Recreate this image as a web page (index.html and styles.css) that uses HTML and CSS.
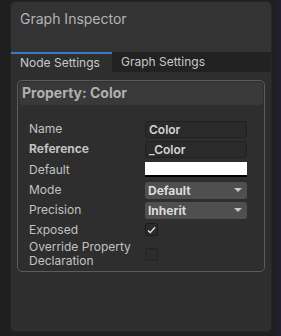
FILE: index.html
```html
<!DOCTYPE html>
<html lang="en">
<head>
<meta charset="UTF-8">
<meta name="viewport" content="width=device-width, initial-scale=1.0">
<title>Graph Inspector</title>
<link rel="stylesheet" href="styles.css">
</head>
<body>

<div class="page">
  <div class="inspector">
    <div class="title">Graph Inspector</div>

    <div class="tabs">
      <div class="tab active">Node Settings</div>
      <div class="tab">Graph Settings</div>
    </div>

    <div class="content">
      <div class="property">
        <div class="property-header">Property: Color</div>

        <div class="rows">
          <div class="row">
            <span class="label">Name</span>
            <span class="text-field">Color</span>
          </div>
          <div class="row">
            <span class="label bold">Reference</span>
            <span class="text-field">_Color</span>
          </div>
          <div class="row">
            <span class="label">Default</span>
            <span class="color-field"></span>
          </div>
          <div class="row">
            <span class="label">Mode</span>
            <span class="dropdown">Default<span class="arrow"></span></span>
          </div>
          <div class="row">
            <span class="label">Precision</span>
            <span class="dropdown">Inherit<span class="arrow"></span></span>
          </div>
          <div class="row short">
            <span class="label">Exposed</span>
            <span class="checkbox">
              <svg width="9" height="8" viewBox="0 0 9 8"><polyline points="1,4.5 3.3,6.6 8,1.2" fill="none" stroke="#e6e6e6" stroke-width="1.4"/></svg>
            </span>
          </div>
          <div class="row tall">
            <span class="label">Override Property<br>Declaration</span>
            <span class="checkbox disabled"></span>
          </div>
        </div>
      </div>
    </div>
  </div>
  <div class="edge"></div>
</div>

</body>
</html>
```

FILE: styles.css
```css
* {
  box-sizing: border-box;
}

body {
  margin: 0;
  background-color: #1f1f1f;
  font-family: Inter, "Noto Sans", sans-serif;
}

.page {
  display: flex;
  height: 336px;
}

.inspector {
  width: 262px;
  height: 331px;
  margin: 1px 0 0 10px;
  background-color: #2e2e2e;
  border: 1px solid #252525;
  border-radius: 5px;
  display: flex;
  flex-direction: column;
}

.title {
  height: 50px;
  padding: 8px 0 0 9px;
  font-size: 14px;
  line-height: 18px;
  color: #b4b4b4;
  background-color: #333333;
  border-radius: 5px 5px 0 0;
}

.tabs {
  display: flex;
  height: 20px;
  background-color: #222222;
}

.tab {
  padding: 0 9px;
  font-size: 12px;
  line-height: 20px;
  white-space: nowrap;
  color: #c8c8c8;
}

.tab.active {
  width: 101px;
  background-color: #2e2e2e;
  border-top: 2px solid #3b7bc2;
  line-height: 17px;
}

.content {
  padding: 8px 6px 0 6px;
}

.property {
  border: 1px solid #5c5c5c;
  border-radius: 5px;
  padding: 1px 1px 2px 1px;
}

.property-header {
  height: 23px;
  padding-left: 3px;
  background-color: #393939;
  border-radius: 4px;
  font-size: 14px;
  font-weight: 700;
  line-height: 22px;
  color: #b0b0b0;
}

.rows {
  padding: 14px 0 0 10px;
}

.row {
  display: flex;
  align-items: center;
  height: 20.3px;
}

.row.short {
  height: 19px;
}

.row.tall {
  height: 30px;
}

.label {
  width: 116px;
  font-size: 12px;
  line-height: 14px;
  color: #c2c2c2;
}

.label.bold {
  font-weight: 700;
}

.text-field {
  width: 102px;
  height: 17px;
  padding-left: 3px;
  background-color: #2a2a2a;
  border: 1px solid #212121;
  border-radius: 3px;
  font-size: 12px;
  font-weight: 600;
  line-height: 15px;
  color: #d4d4d4;
}

.color-field {
  width: 102px;
  height: 15px;
  background-color: #ffffff;
  border-bottom: 2px solid #000000;
}

.dropdown {
  display: flex;
  justify-content: space-between;
  align-items: center;
  width: 102px;
  height: 17px;
  padding: 0 5px 0 3px;
  background-color: #4f4f4f;
  border-radius: 3px;
  font-size: 12px;
  font-weight: 700;
  color: #dcdcdc;
}

.arrow {
  width: 0;
  height: 0;
  border-left: 4px solid transparent;
  border-right: 4px solid transparent;
  border-top: 4px solid #c8c8c8;
}

.checkbox {
  display: flex;
  align-items: center;
  justify-content: center;
  width: 13px;
  height: 13px;
  background-color: #2a2a2a;
  border: 1px solid #1c1c1c;
  border-radius: 2px;
}

.checkbox.disabled {
  background-color: #2c2c2c;
  border-color: #232323;
}

.edge {
  width: 4px;
  margin-left: 5px;
  background-color: #221e2c;
}
```
